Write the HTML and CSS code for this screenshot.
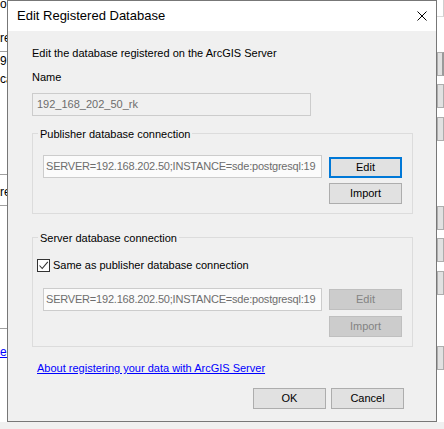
FILE: index.html
```html
<!DOCTYPE html>
<html lang="en">
<head>
<meta charset="utf-8">
<title>Edit Registered Database</title>
<link rel="stylesheet" href="styles.css">
</head>
<body>
<div class="screen">
  <div class="main-row">
    <div class="bg-left">
      <div class="bl-text bl-o">o</div>
      <div class="bl-text bl-re1">re</div>
      <div class="bl-line bl-line1"></div>
      <div class="bl-text bl-92">92</div>
      <div class="bl-text bl-ca">ca</div>
      <div class="bl-line bl-line2"></div>
      <div class="bl-text bl-re2">re</div>
      <div class="bl-line bl-line3"></div>
      <div class="bl-line bl-line4"></div>
      <div class="bl-text bl-link">ec</div>
    </div>

    <div class="dialog">
      <div class="titlebar">
        <span class="title">Edit Registered Database</span>
        <svg class="close" width="10" height="10" viewBox="0 0 10 10" aria-label="Close">
          <path d="M0.5 0.5 L9.5 9.5 M9.5 0.5 L0.5 9.5" stroke="#000" stroke-width="1" fill="none"/>
        </svg>
      </div>
      <div class="body">
        <div class="intro">Edit the database registered on the ArcGIS Server</div>
        <div class="name-label">Name</div>
        <div class="name-field">192_168_202_50_rk</div>

        <div class="group group-pub">
          <div class="group-title">Publisher database connection</div>
          <div class="conn-row">
            <div class="conn-field">SERVER=192.168.202.50;INSTANCE=sde:postgresql:19</div>
            <div class="btn-col btn-col-pub">
              <div class="btn btn-focus">Edit</div>
              <div class="btn">Import</div>
            </div>
          </div>
        </div>

        <div class="group group-srv">
          <div class="group-title">Server database connection</div>
          <div class="check-row">
            <span class="checkbox">
              <svg width="11" height="11" viewBox="0 0 11 11">
                <path d="M1.5 5.5 L4.2 8.5 L9.8 1.8" stroke="#333" stroke-width="1.1" fill="none"/>
              </svg>
            </span>
            <span class="check-label">Same as publisher database connection</span>
          </div>
          <div class="conn-row">
            <div class="conn-field">SERVER=192.168.202.50;INSTANCE=sde:postgresql:19</div>
            <div class="btn-col btn-col-srv">
              <div class="btn btn-disabled">Edit</div>
              <div class="btn btn-disabled">Import</div>
            </div>
          </div>
        </div>

        <a class="link" href="#">About registering your data with ArcGIS Server</a>

        <div class="footer">
          <div class="btn">OK</div>
          <div class="btn">Cancel</div>
        </div>
      </div>
    </div>

    <div class="bg-right">
      <div class="br-top"></div>
      <div class="br-btn br-b1"></div>
      <div class="br-btn br-b2"></div>
      <div class="br-btn br-b3"></div>
      <div class="br-btn br-b4"></div>
      <div class="br-btn br-b5"></div>
      <div class="br-btn br-b6"></div>
      <div class="br-btn br-b7"></div>
    </div>
  </div>
  <div class="bottom-strip"></div>
</div>
</body>
</html>
```

FILE: styles.css
```css
* { box-sizing: border-box; }

html, body {
  margin: 0;
  padding: 0;
  background: #ffffff;
}

body {
  font-family: "Liberation Sans", Arial, sans-serif;
  font-size: 11px;
  color: #000;
}

.screen {
  width: 444px;
  height: 429px;
  overflow: hidden;
  display: flex;
  flex-direction: column;
}

.main-row {
  display: flex;
  height: 422px;
}

/* background window, left strip */
.bg-left {
  width: 7px;
  overflow: hidden;
  background: #fff;
  display: flex;
  flex-direction: column;
  flex: none;
}

.bl-text {
  line-height: 16px;
  height: 16px;
  white-space: nowrap;
  font-size: 12px;
}

.bl-line {
  height: 1px;
  background: #a0a0a0;
  flex: none;
}

.bl-o { margin-top: -4px; }
.bl-re1 { margin-top: 18px; }
.bl-line1 { margin-top: 5px; }
.bl-92 { margin-top: 1px; }
.bl-ca { margin-top: 2px; }
.bl-line2 { margin-top: 87px; }
.bl-re2 { margin-top: 9px; }
.bl-line3 { margin-top: 5px; }
.bl-line4 { margin-top: 122px; }
.bl-link {
  margin-top: 15px;
  color: #0000ff;
  text-decoration: underline;
}

/* background window, right strip */
.bg-right {
  width: 7px;
  flex: none;
  background: #fff;
  display: flex;
  flex-direction: column;
}

.br-top {
  height: 17px;
  border-right: 1px solid #cfcfcf;
  border-bottom: 1px solid #dadada;
}

.br-btn {
  height: 24px;
  background: #e1e1e1;
  border: 1px solid #adadad;
  flex: none;
}

.br-b1 { margin-top: 35px; border-right: 2px solid #9a9a9a; }
.br-b2 { margin-top: 8px; }
.br-b3 { margin-top: 9px; }
.br-b4 { margin-top: 65px; }
.br-b5 { margin-top: 8px; }
.br-b6 { margin-top: 9px; }
.br-b7 { margin-top: 51px; }

.bottom-strip {
  height: 7px;
  background: #f0f0f0;
}

/* dialog */
.dialog {
  width: 430px;
  height: 422px;
  flex: none;
  border: 1px solid #777;
  display: flex;
  flex-direction: column;
  background: #f0f0f0;
}

.titlebar {
  height: 30px;
  background: #fff;
  display: flex;
  align-items: center;
  justify-content: space-between;
  padding-left: 9px;
  padding-right: 9px;
  flex: none;
}

.title {
  font-size: 13px;
  line-height: 30px;
  color: #000;
}

.close {
  display: block;
}

.body {
  flex: 1;
  padding: 14px 23px 12px 24px;
  display: flex;
  flex-direction: column;
}

.intro {
  line-height: 16px;
}

.name-label {
  margin-top: 8px;
  line-height: 16px;
}

.name-field {
  margin-top: 8px;
  width: 279px;
  height: 23px;
  border: 1px solid #cccccc;
  background: #f0f0f0;
  color: #6d6d6d;
  padding-left: 4px;
  line-height: 21px;
}

.group {
  border: 1px solid #dcdcdc;
  padding-bottom: 9px;
}

.group-pub { margin-top: 17px; }
.group-srv { margin-top: 23px; }

.group-title {
  width: fit-content;
  margin: -8px 0 0 5px;
  padding: 0 2px;
  background: #f0f0f0;
  line-height: 16px;
}

.conn-row {
  display: flex;
  align-items: flex-start;
  margin-left: 10px;
}

.group-pub .conn-row { margin-top: 13px; }
.group-srv .conn-row { margin-top: 15px; }

.conn-field {
  width: 279px;
  height: 23px;
  border: 1px solid #cccccc;
  background: #fbfbfb;
  color: #6d6d6d;
  padding-left: 2px;
  line-height: 21px;
  white-space: nowrap;
  overflow: hidden;
  letter-spacing: -0.2px;
}

.btn-col {
  margin-left: 7px;
  display: flex;
  flex-direction: column;
}

.btn-col-pub { margin-top: 2px; gap: 5px; }
.btn-col-srv { margin-top: 1px; gap: 6px; }

.btn {
  width: 73px;
  height: 21px;
  border: 1px solid #adadad;
  background: #e1e1e1;
  text-align: center;
  line-height: 19px;
  color: #000;
}

.btn-focus {
  border: 2px solid #0078d7;
  line-height: 17px;
}

.btn-disabled {
  background: #cccccc;
  border-color: #bfbfbf;
  color: #838383;
}

.check-row {
  margin-top: 11px;
  margin-left: 4px;
  display: flex;
  align-items: center;
  line-height: 16px;
}

.checkbox {
  width: 13px;
  height: 13px;
  border: 1px solid #333;
  background: #fff;
  display: flex;
  align-items: center;
  justify-content: center;
  flex: none;
}

.checkbox svg { display: block; }

.check-label {
  margin-left: 3px;
}

.link {
  margin-top: 13px;
  margin-left: 5px;
  width: fit-content;
  line-height: 16px;
  color: #0000ff;
  text-decoration: underline;
}

.footer {
  margin-top: 12px;
  display: flex;
  justify-content: flex-end;
  gap: 5px;
  padding-right: 9px;
}
```
